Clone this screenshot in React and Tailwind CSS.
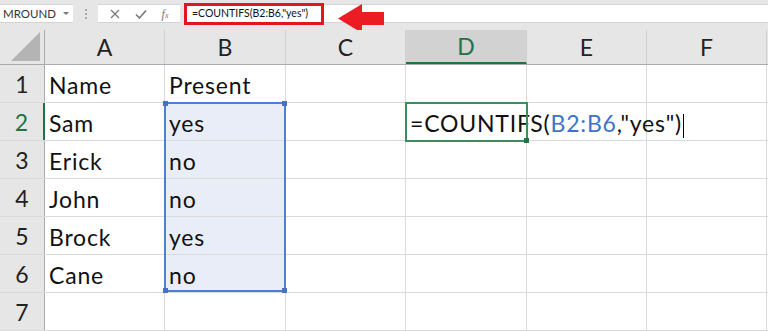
import React from "react";

const cols = ["A", "B", "C", "D", "E", "F"];
const widths = ["w-[120px]", "w-[121px]", "w-[120px]", "w-[121px]", "w-[120px]", "w-[120px]"];

const rows = [
  ["Name", "Present"],
  ["Sam", "yes"],
  ["Erick", "no"],
  ["John", "no"],
  ["Brock", "yes"],
  ["Cane", "no"],
  ["", ""],
];

const cellFont = { fontFamily: "Lato, 'Open Sans', sans-serif" };

function TopBar() {
  return (
    <div className="relative h-[30px] bg-[#e6e6e6] flex items-start pt-[4px] text-[11px] text-[#333]" style={cellFont}>
      <div className="w-[73px] h-[19px] bg-white border-y border-[#d4d4d4] flex items-center justify-between pl-[3px] pr-[4px] text-[11.5px]">
        <span>MROUND</span>
        <span className="w-0 h-0 border-x-[3px] border-x-transparent border-t-[3px] border-t-[#777]" />
      </div>
      <div className="w-[25px] h-[19px] flex flex-col items-center justify-center gap-[2px]">
        <span className="w-[2px] h-[2px] bg-[#aaa]" />
        <span className="w-[2px] h-[2px] bg-[#aaa]" />
        <span className="w-[2px] h-[2px] bg-[#aaa]" />
      </div>
      <div className="w-[82px] h-[19px] bg-white border-y border-[#d4d4d4] flex items-center justify-around px-[4px] text-[#666]">
        <svg width="10" height="10" viewBox="0 0 10 10">
          <path d="M1 1 L9 9 M9 1 L1 9" stroke="#777" strokeWidth="1.2" fill="none" />
        </svg>
        <svg width="12" height="10" viewBox="0 0 12 10">
          <path d="M1 5.5 L4.5 9 L11 1.5" stroke="#777" strokeWidth="1.6" fill="none" />
        </svg>
        <span className="italic text-[12px] text-[#777]" style={{ fontFamily: "'Liberation Serif', serif" }}>
          f<span className="text-[8px]">x</span>
        </span>
      </div>
      <div className="ml-[6px] flex-1 h-[19px] bg-white border-y border-[#d4d4d4] flex items-center pl-[6px] text-[10.5px] text-[#111]">
        =COUNTIFS(B2:B6,"yes")
      </div>
      <div className="absolute left-[184px] top-[3px] w-[140px] h-[22px] border-[3px] border-[#e3161d]" />
      <svg className="absolute left-[337px] top-[4px]" width="48" height="30" viewBox="0 0 48 30">
        <polygon points="1,14.5 25,0 25,8 47,8 47,21 25,21 25,29" fill="#ec1c24" />
      </svg>
    </div>
  );
}

function Grid() {
  return (
    <div className="relative" style={cellFont}>
      <div className="flex h-[35px] bg-[#e6e6e6] border-b border-[#ababab]">
        <div className="w-[45px] border-r border-[#ababab] flex items-end justify-end pr-[3px] pb-[3px]">
          <svg width="30" height="29" viewBox="0 0 30 29">
            <polygon points="29,0 29,29 0,29" fill="#b4b4b4" />
          </svg>
        </div>
        {cols.map((c, i) => (
          <div
            key={c}
            className={`${widths[i]} border-r border-[#d0d0d0] flex items-center justify-center text-[23px] ${
              c === "D" ? "bg-[#d2d2d2] text-[#217346] border-b-2 border-b-[#217346]" : "text-[#222]"
            }`}
          >
            {c}
          </div>
        ))}
      </div>
      {rows.map((r, ri) => (
        <div key={ri} className="flex h-[38px] border-b border-[#dadada]">
          <div
            className={`w-[45px] bg-[#e6e6e6] flex items-center justify-center text-[23px] pt-[2px] ${
              ri === 1 ? "text-[#217346] border-r-2 border-[#217346]" : "text-[#222] border-r border-[#ababab]"
            }`}
          >
            {ri + 1}
          </div>
          {cols.map((c, ci) => {
            const text = ci < 2 ? r[ci] : "";
            const selected = ci === 1 && ri >= 1 && ri <= 5;
            const active = ci === 3 && ri === 1;
            return (
              <div
                key={c}
                className={`${widths[ci]} border-r border-[#dadada] flex items-center pl-[4px] pt-[3px] text-[23px] tracking-[0.8px] text-[#111] whitespace-nowrap ${
                  selected ? "bg-[#e8edf7]" : "bg-white"
                } ${active ? "relative z-10 overflow-visible" : ""}`}
              >
                {active ? (
                  <span>
                    =COUNTIFS(<span className="text-[#3e73c8]">B2:B6</span>,"yes")
                    <span className="inline-block w-[1px] h-[24px] bg-black align-middle ml-[1px]" />
                  </span>
                ) : (
                  text
                )}
              </div>
            );
          })}
        </div>
      ))}
      {/* selection B2:B6 */}
      <div className="absolute left-[164px] top-[72px] w-[122px] h-[190px] border-2 border-[#4f7fd0] pointer-events-none">
        <span className="absolute -left-[3px] -top-[3px] w-[5px] h-[5px] bg-[#4472c4]" />
        <span className="absolute -right-[3px] -top-[3px] w-[5px] h-[5px] bg-[#4472c4]" />
        <span className="absolute -left-[3px] -bottom-[3px] w-[5px] h-[5px] bg-[#4472c4]" />
        <span className="absolute -right-[3px] -bottom-[3px] w-[5px] h-[5px] bg-[#4472c4]" />
      </div>
      {/* active cell D2 */}
      <div className="absolute left-[405px] top-[72px] w-[123px] h-[40px] border-2 border-[#3f8a5e] pointer-events-none z-20">
        <span className="absolute -right-[3px] -bottom-[3px] w-[5px] h-[5px] bg-[#217346]" />
      </div>
    </div>
  );
}

export default function App() {
  return (
    <div className="w-[768px] h-[331px] overflow-hidden bg-white">
      <TopBar />
      <Grid />
    </div>
  );
}
